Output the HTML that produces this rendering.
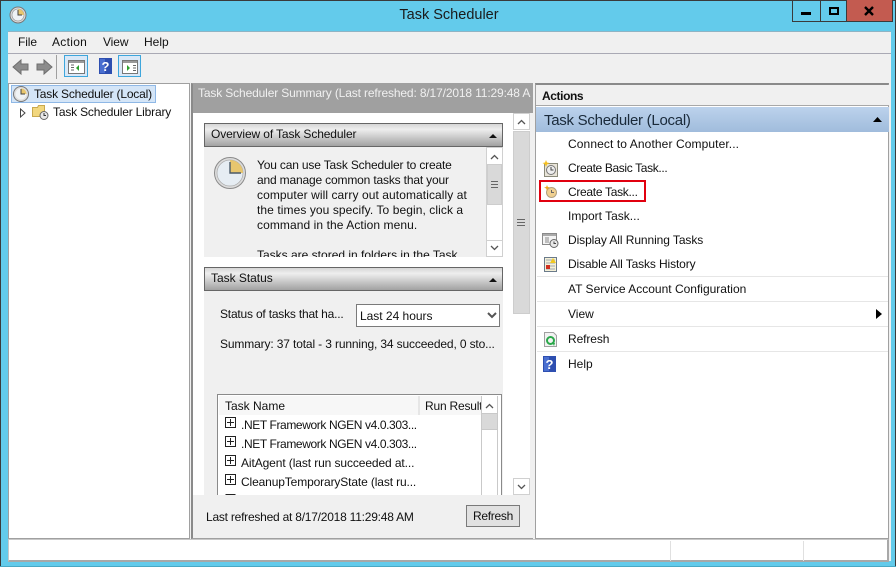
<!DOCTYPE html>
<html><head><meta charset="utf-8">
<style>
html,body{margin:0;padding:0}
body{width:896px;height:567px;overflow:hidden;position:relative;background:#63cbeb;font-family:"Liberation Sans",sans-serif;font-size:12px;color:#111}
div,span.a{position:absolute;box-sizing:border-box}
.t{position:absolute;white-space:nowrap;line-height:16px;height:16px}
svg{position:absolute;display:block}
.hdr{background:linear-gradient(#d6d6d6,#eeeeee 25%,#a2a2a2);border:1px solid #666}
.sep{background:#e6e6e6;height:1px;left:537px;width:351px}
</style></head><body>
<div style="left:0;top:0;width:896px;height:1px;background:#3a3a3a"></div>
<div style="left:0;top:0;width:1px;height:567px;background:#3a3a3a"></div>
<div style="left:895px;top:0;width:1px;height:567px;background:#3a3a3a"></div>
<div style="left:0;top:566px;width:896px;height:1px;background:#4aa8c4"></div>

<svg style="left:9px;top:6px" width="18" height="18" viewBox="0 0 18 18"><circle cx="9" cy="9" r="8" fill="#ddd" stroke="#777"/><circle cx="9" cy="9" r="6" fill="#eef2f5" stroke="#999" stroke-width=".7"/><path d="M9 3a6 6 0 0 1 6 6H9z" fill="#e8c66e"/><path d="M9 4v5h4" stroke="#444" stroke-width="1" fill="none"/></svg>
<div class="t" style="left:300px;top:7px;width:298px;text-align:center;font-size:14.5px;color:#1a1a1a">Task Scheduler</div>

<div style="left:792px;top:0;width:29px;height:22px;border:1px solid #3a3a3a;border-top:none"></div>
<div style="left:820px;top:0;width:27px;height:22px;border:1px solid #3a3a3a;border-top:none"></div>
<div style="left:846px;top:0;width:47px;height:22px;background:#c35b50;border:1px solid #3a3a3a;border-top:none"></div>
<div style="left:801px;top:12px;width:10px;height:3px;background:#000"></div>
<div style="left:829px;top:7px;width:10px;height:8px;border:2px solid #000"></div>
<svg style="left:864px;top:6px" width="10" height="10" viewBox="0 0 10 10"><path d="M1 1l8 8M9 1l-8 8" stroke="#000" stroke-width="2.4"/></svg>

<div style="left:8px;top:31px;width:883px;height:530px;background:#f0f0f0;border-top:1px solid #8fb4c4"></div>
<div style="left:8px;top:53px;width:883px;height:1px;background:#a9a9b4"></div>
<div class="t" style="left:18px;top:34px;letter-spacing:-.1px">File</div>
<div class="t" style="left:52px;top:34px;letter-spacing:.3px">Action</div>
<div class="t" style="left:103px;top:34px;letter-spacing:-.1px">View</div>
<div class="t" style="left:144px;top:34px">Help</div>

<svg style="left:12px;top:58px" width="42" height="18" viewBox="0 0 42 18"><path d="M1 9l8-7v4h7v6H9v4z" fill="#8c8c8c" stroke="#6e6e6e"/><path d="M40 9l-8-7v4h-7v6h7v4z" fill="#8c8c8c" stroke="#6e6e6e"/></svg>
<div style="left:56px;top:55px;width:1px;height:24px;background:#a0a0a0"></div>
<div style="left:64px;top:55px;width:24px;height:22px;background:#d9e8f7;border:1px solid #3ea6dc"></div>
<svg style="left:68px;top:60px" width="17" height="14" viewBox="0 0 17 14"><rect x=".5" y=".5" width="16" height="13" fill="#fff" stroke="#777"/><rect x="1" y="1" width="15" height="2" fill="#999"/><path d="M3 5h3M3 7.500h3M3 10h3" stroke="#666"/><path d="M11 5v6l-3-3z" fill="#2ca02c"/></svg>
<svg style="left:99px;top:58px" width="13" height="16" viewBox="0 0 13 16"><rect width="13" height="16" fill="#2e4fb0"/><rect x="1" y="1" width="5" height="14" fill="#4a6fd0"/><text x="6.500" y="13" font-family="Liberation Sans" font-size="13" font-weight="bold" fill="#fff" text-anchor="middle">?</text></svg>
<div style="left:118px;top:55px;width:23px;height:22px;background:#d9e8f7;border:1px solid #3ea6dc"></div>
<svg style="left:122px;top:60px" width="16" height="14" viewBox="0 0 16 14"><rect x=".5" y=".5" width="15" height="13" fill="#fff" stroke="#777"/><rect x="1" y="1" width="14" height="2" fill="#999"/><path d="M11 5.500h3M11 8h3M11 10.500h3" stroke="#666"/><path d="M5 5v6l3-3z" fill="#2ca02c"/></svg>

<!-- Left pane -->
<div style="left:8px;top:83px;width:182px;height:456px;background:#fff;border:1px solid #a0a0a0"></div>
<div style="left:11px;top:85px;width:145px;height:18px;background:#d4e5f7;border:1px solid #8fb8e6"></div>
<svg style="left:12px;top:85px" width="18" height="18" viewBox="0 0 18 18"><circle cx="9" cy="9" r="7.500" fill="#ddd" stroke="#777"/><circle cx="9" cy="9" r="5.500" fill="#f0f3f5"/><path d="M9 3.500a5.500 5.500 0 0 1 5.500 5.500H9z" fill="#e8c66e"/><path d="M9 4v5h4" stroke="#444" fill="none"/></svg>
<div class="t" style="left:34px;top:86px;letter-spacing:-.19px">Task Scheduler (Local)</div>
<svg style="left:19px;top:108px" width="8" height="10" viewBox="0 0 8 10"><path d="M1.500 1v8l4.500-4z" fill="#fff" stroke="#444"/></svg>
<svg style="left:32px;top:104px" width="17" height="16" viewBox="0 0 17 16"><path d="M.5 3.500h5l1-2h6v11H.5z" fill="#f2d77e" stroke="#c9a94e"/><circle cx="12" cy="11.500" r="4" fill="#e8e8e8" stroke="#666"/><path d="M12 9v2.500h2" stroke="#333" fill="none"/></svg>
<div class="t" style="left:53px;top:104px;letter-spacing:-.18px">Task Scheduler Library</div>

<!-- Middle pane -->
<div style="left:191px;top:83px;width:342px;height:456px;background:#f0f0f0;border:1px solid #a0a0a0;border-left:2px solid #8a8a8a;border-right:none"></div>
<div style="left:193px;top:84px;width:340px;height:29px;background:#a0a0a0"></div>
<div class="t" style="left:198px;top:85px;width:333px;overflow:hidden;color:#f0f0f0;letter-spacing:-.14px">Task Scheduler Summary (Last refreshed: 8/17/2018 11:29:48 AM)</div>
<div style="left:193px;top:113px;width:320px;height:382px;background:#fff"></div>

<div style="left:513px;top:113px;width:17px;height:382px;background:#fff"></div>
<div style="left:513px;top:113px;width:17px;height:17px;border:1px solid #d0d0d0;background:#fff"></div>
<svg style="left:517px;top:119px" width="9" height="6" viewBox="0 0 9 6"><path d="M1 5l3.500-3.500L8 5" stroke="#555" stroke-width="1.300" fill="none"/></svg>
<div style="left:513px;top:131px;width:17px;height:183px;background:#d9d9d9;border:1px solid #cdcdcd"></div>
<div style="left:517px;top:219px;width:8px;height:7px;border-top:1px solid #666;border-bottom:1px solid #666"></div>
<div style="left:517px;top:222px;width:8px;height:1px;background:#666"></div>
<div style="left:513px;top:478px;width:17px;height:17px;border:1px solid #d0d0d0;background:#fff"></div>
<svg style="left:517px;top:484px" width="9" height="6" viewBox="0 0 9 6"><path d="M1 1l3.500 3.500L8 1" stroke="#555" stroke-width="1.300" fill="none"/></svg>

<!-- Overview -->
<div class="hdr" style="left:204px;top:123px;width:299px;height:24px"></div>
<div class="t" style="left:211px;top:126px;letter-spacing:-.12px">Overview of Task Scheduler</div>
<svg style="left:489px;top:134px" width="8" height="5" viewBox="0 0 8 5"><path d="M4 0l4 4H0z" fill="#111"/></svg>
<div style="left:204px;top:147px;width:299px;height:110px;background:#f0f0f0;overflow:hidden"></div>
<svg style="left:213px;top:156px" width="34" height="34" viewBox="0 0 34 34"><circle cx="17" cy="17" r="15.500" fill="#dcdcdc" stroke="#8a8a8a"/><circle cx="17" cy="17" r="13" fill="#e6edf3" stroke="#aaa" stroke-width=".7"/><path d="M17 4a13 13 0 0 1 13 13H17z" fill="#e8c66e"/><path d="M17 6v11h11" stroke="#4a5a68" stroke-width="1.400" fill="none"/></svg>
<div class="t" style="left:257px;top:157px;letter-spacing:-.17px">You can use Task Scheduler to create</div>
<div class="t" style="left:257px;top:172px;letter-spacing:-.17px">and manage common tasks that your</div>
<div class="t" style="left:257px;top:187px;letter-spacing:.08px">computer will carry out automatically at</div>
<div class="t" style="left:257px;top:202px;letter-spacing:.08px">the times you specify. To begin, click a</div>
<div class="t" style="left:257px;top:217px;letter-spacing:.08px">command in the Action menu.</div>
<div style="left:204px;top:247px;width:283px;height:10px;overflow:hidden;background:#f0f0f0"><div class="t" style="left:53px;top:0">Tasks are stored in folders in the Task</div></div>

<div style="left:486px;top:147px;width:17px;height:110px;background:#fff;border:1px solid #d0d0d0"></div>
<svg style="left:490px;top:154px" width="9" height="6" viewBox="0 0 9 6"><path d="M1 5l3.500-3.500L8 5" stroke="#555" stroke-width="1.300" fill="none"/></svg>
<div style="left:487px;top:164px;width:15px;height:41px;background:#d9d9d9;border:1px solid #cdcdcd"></div>
<div style="left:491px;top:181px;width:7px;height:7px;border-top:1px solid #666;border-bottom:1px solid #666"></div>
<div style="left:491px;top:184px;width:7px;height:1px;background:#666"></div>
<svg style="left:490px;top:245px" width="9" height="6" viewBox="0 0 9 6"><path d="M1 1l3.500 3.500L8 1" stroke="#555" stroke-width="1.300" fill="none"/></svg>
<div style="left:487px;top:240px;width:15px;height:1px;background:#d0d0d0"></div>

<!-- Task Status -->
<div class="hdr" style="left:204px;top:267px;width:299px;height:24px"></div>
<div class="t" style="left:211px;top:270px;letter-spacing:-.03px">Task Status</div>
<svg style="left:489px;top:278px" width="8" height="5" viewBox="0 0 8 5"><path d="M4 0l4 4H0z" fill="#111"/></svg>
<div style="left:204px;top:291px;width:299px;height:204px;background:#f0f0f0"></div>
<div class="t" style="left:220px;top:306px;letter-spacing:-.2px">Status of tasks that ha...</div>
<div style="left:356px;top:304px;width:144px;height:23px;background:#fff;border:1px solid #7a7a7a"></div>
<div class="t" style="left:360px;top:308px;letter-spacing:-.02px">Last 24 hours</div>
<svg style="left:487px;top:312px" width="10" height="7" viewBox="0 0 10 7"><path d="M1 1l4 4 4-4" stroke="#555" stroke-width="2" fill="none"/></svg>
<div class="t" style="left:220px;top:336px;letter-spacing:-.14px">Summary: 37 total - 3 running, 34 succeeded, 0 sto...</div>

<div style="left:217px;top:394px;width:285px;height:101px;background:#fff;border:1px solid #8a8a8a;border-bottom:none;overflow:hidden"></div>
<div style="left:219px;top:396px;width:263px;height:19px;background:#f7f7f7"></div>
<div style="left:418px;top:396px;width:2px;height:19px;background:#e6e6e6"></div>
<div class="t" style="left:225px;top:398px">Task Name</div>
<div class="t" style="left:425px;top:398px;width:56px;overflow:hidden;letter-spacing:-.2px">Run Result</div>
<div style="left:481px;top:396px;width:17px;height:99px;background:#fff;border-left:1px solid #c9c9c9;border-right:1px solid #c9c9c9"></div>
<svg style="left:485px;top:403px" width="9" height="6" viewBox="0 0 9 6"><path d="M1 5l3.500-3.500L8 5" stroke="#555" stroke-width="1.300" fill="none"/></svg>
<div style="left:481px;top:413px;width:17px;height:17px;background:#d9d9d9;border:1px solid #c9c9c9"></div>

<svg style="left:225px;top:417px" width="11" height="78" viewBox="0 0 11 78"><g fill="none" stroke="#222"><rect x=".5" y=".5" width="10" height="10"/><path d="M5.500 2v7M2 5.500h7"/><rect x=".5" y="19.500" width="10" height="10"/><path d="M5.500 21v7M2 24.500h7"/><rect x=".5" y="38.500" width="10" height="10"/><path d="M5.500 40v7M2 43.500h7"/><rect x=".5" y="57.500" width="10" height="10"/><path d="M5.500 59v7M2 62.500h7"/><path d="M.5 77.500h10"/></g></svg>
<div class="t" style="left:241px;top:417px;letter-spacing:-.39px">.NET Framework NGEN v4.0.303...</div>
<div class="t" style="left:241px;top:436px;letter-spacing:-.39px">.NET Framework NGEN v4.0.303...</div>
<div class="t" style="left:241px;top:455px;letter-spacing:-.1px">AitAgent (last run succeeded at...</div>
<div class="t" style="left:241px;top:474px;letter-spacing:-.13px">CleanupTemporaryState (last ru...</div>

<div style="left:193px;top:495px;width:340px;height:43px;background:#f0f0f0"></div>
<div class="t" style="left:206px;top:509px;letter-spacing:-.23px">Last refreshed at 8/17/2018 11:29:48 AM</div>
<div style="left:466px;top:505px;width:54px;height:22px;background:#e1e1e1;border:1px solid #7a7a7a;text-align:center;line-height:20px;letter-spacing:-.3px">Refresh</div>

<!-- Actions pane -->
<div style="left:535px;top:83px;width:354px;height:456px;background:#fff;border:1px solid #a0a0a0;border-top:2px solid #8a8a8a"></div>
<div style="left:536px;top:85px;width:353px;height:21px;background:#f0f0f0;border-bottom:1px solid #a8a8a8"></div>
<div class="t" style="left:542px;top:88px;font-weight:bold;letter-spacing:-.4px">Actions</div>
<div style="left:536px;top:107px;width:353px;height:25px;background:linear-gradient(#bcd2ec,#a0bcdc)"></div>
<div class="t" style="left:544px;top:113px;font-size:15px;color:#1a2a3a;letter-spacing:-.27px">Task Scheduler (Local)</div>
<svg style="left:873px;top:117px" width="9" height="6" viewBox="0 0 9 6"><path d="M4.500 0l4.500 5H0z" fill="#000"/></svg>

<div class="t" style="left:568px;top:136px;letter-spacing:.1px">Connect to Another Computer...</div>
<svg style="left:542px;top:160px" width="17" height="17" viewBox="0 0 17 17"><rect x="2.500" y="3.500" width="13" height="13" fill="#e8e4d8" stroke="#8a8a7a"/><circle cx="9" cy="10" r="4.500" fill="#eee" stroke="#777"/><path d="M9 7v3h2.500" stroke="#444" fill="none"/><path d="M4 0l1 2.500L7.500 3 5 4.500 4 7 3 4.500.5 3 3 2.500z" fill="#f5c020"/></svg>
<div class="t" style="left:568px;top:160px;letter-spacing:-.36px">Create Basic Task...</div>
<div style="left:539px;top:180px;width:107px;height:22px;border:2px solid #e1000f"></div>
<svg style="left:544px;top:184px" width="14" height="15" viewBox="0 0 14 15"><circle cx="7.500" cy="8.500" r="5" fill="#f0d090" stroke="#b0a080"/><path d="M7.500 6v2.500H10" stroke="#666" fill="none"/><path d="M3 1l.800 2L6 3.500 3.800 4.500 3 7 2.200 4.500 0 3.500 2.200 3z" fill="#f0a818"/></svg>
<div class="t" style="left:568px;top:184px;letter-spacing:-.3px">Create Task...</div>
<div class="t" style="left:568px;top:208px">Import Task...</div>
<svg style="left:542px;top:233px" width="17" height="15" viewBox="0 0 17 15"><rect x=".5" y=".5" width="14" height="11" fill="#f4f4f4" stroke="#8a8a8a"/><rect x="1" y="1" width="13" height="2" fill="#aaa"/><path d="M3 5h4M3 7h4M3 9h4" stroke="#888"/><circle cx="12" cy="10.500" r="4" fill="#e8e8e8" stroke="#666"/><path d="M12 8.500v2h2" stroke="#444" fill="none"/></svg>
<div class="t" style="left:568px;top:232px;letter-spacing:-.08px">Display All Running Tasks</div>
<svg style="left:543px;top:257px" width="15" height="15" viewBox="0 0 15 15"><rect x="1.500" y=".5" width="12" height="14" fill="#f4f0d8" stroke="#6a7a8a"/><path d="M3 3h9M3 6h9M3 9h9M3 12h9" stroke="#a0a8b0"/><rect x="3" y="8" width="4" height="4" fill="#d03020"/><path d="M10 1l3 5H7z" fill="#f0c820"/></svg>
<div class="t" style="left:568px;top:256px;letter-spacing:-.12px">Disable All Tasks History</div>
<div class="sep" style="top:276px"></div>
<div class="t" style="left:568px;top:281px">AT Service Account Configuration</div>
<div class="sep" style="top:301px"></div>
<div class="t" style="left:568px;top:306px">View</div>
<svg style="left:876px;top:309px" width="6" height="10" viewBox="0 0 6 10"><path d="M0 0l6 5-6 5z" fill="#000"/></svg>
<div class="sep" style="top:326px"></div>
<svg style="left:544px;top:332px" width="13" height="15" viewBox="0 0 13 15"><path d="M.5.500h9l3 3v11H.5z" fill="#f2f2f2" stroke="#a0a0a0"/><circle cx="6.500" cy="8.500" r="3.500" fill="none" stroke="#2aa84a" stroke-width="2"/><path d="M8 10l3 1-1 3z" fill="#2aa84a"/></svg>
<div class="t" style="left:568px;top:331px;letter-spacing:-.1px">Refresh</div>
<div class="sep" style="top:351px"></div>
<svg style="left:543px;top:356px" width="13" height="16" viewBox="0 0 13 16"><rect width="13" height="16" fill="#2e4fb0"/><rect x="1" y="1" width="5" height="14" fill="#4a6fd0"/><text x="6.500" y="13" font-family="Liberation Sans" font-size="13" font-weight="bold" fill="#fff" text-anchor="middle">?</text></svg>
<div class="t" style="left:568px;top:356px">Help</div>

<!-- Status bar -->
<div style="left:8px;top:539px;width:881px;height:23px;background:#fff;border:1px solid #c8c8c8;border-bottom:2px solid #a8a8a8;border-right:2px solid #a8a8a8"></div>
<div style="left:670px;top:541px;width:1px;height:20px;background:#e0e0e0"></div>
<div style="left:803px;top:541px;width:1px;height:20px;background:#e0e0e0"></div>
</body></html>
